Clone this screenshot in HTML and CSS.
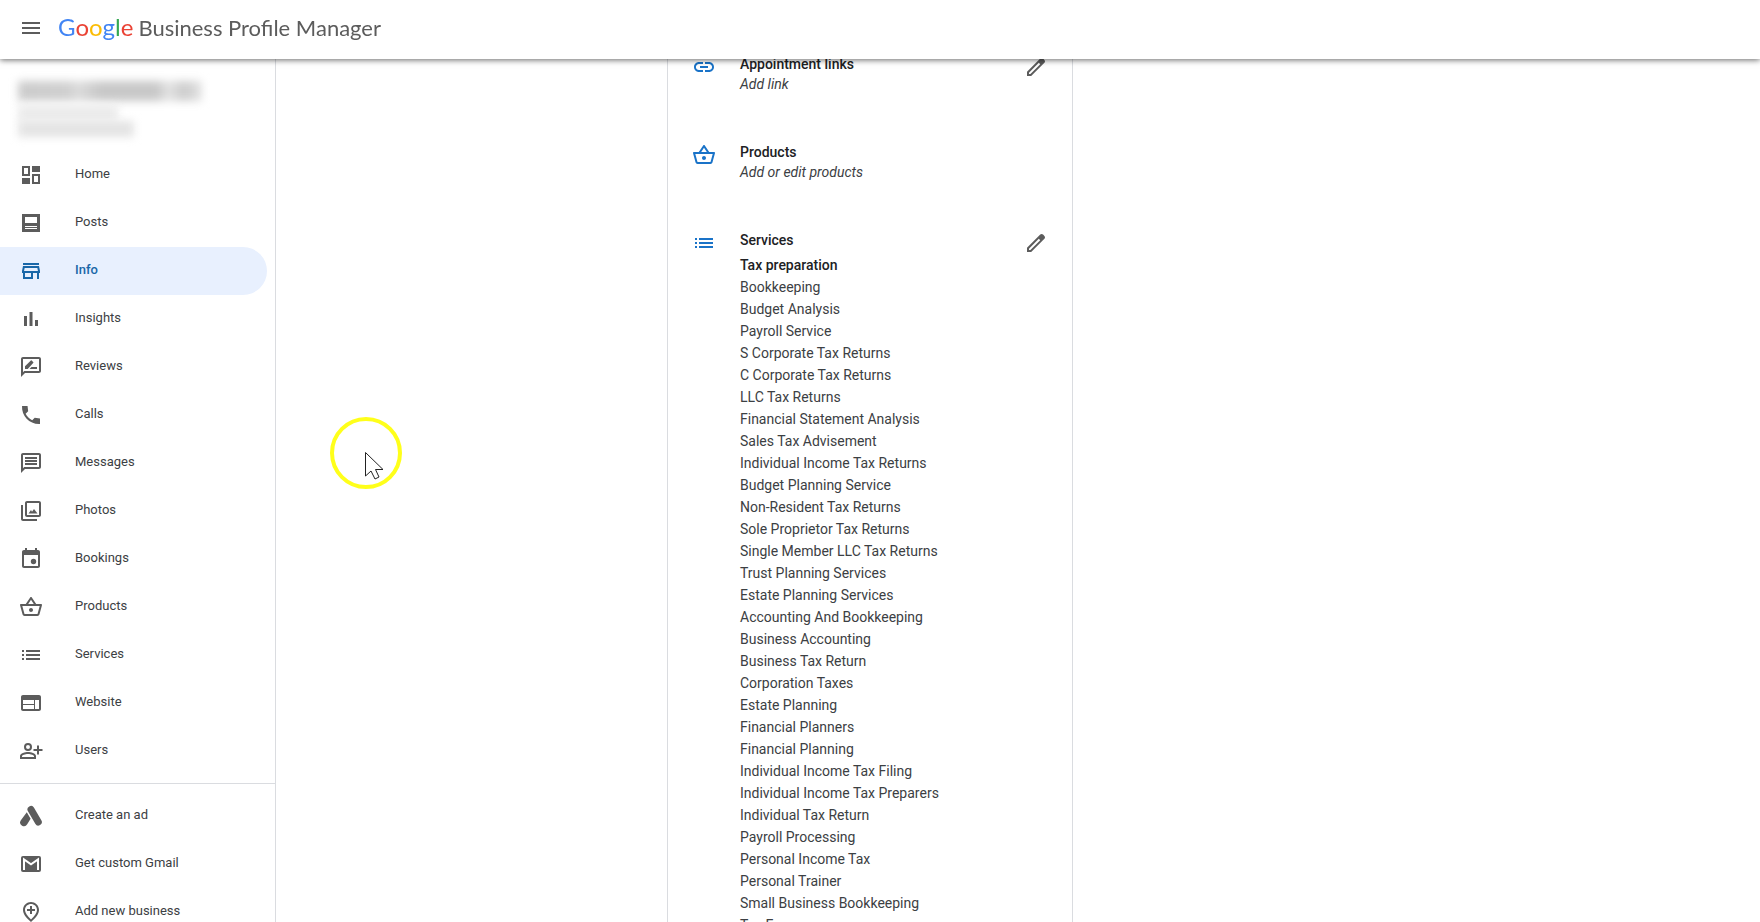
FILE: index.html
```
<!DOCTYPE html>
<html lang="en">
<head>
    <meta charset="UTF-8">
    <meta name="viewport" content="width=device-width, initial-scale=1.0">
    <title>Google Business Profile Manager</title>
    <link rel="stylesheet" href="styles.css">
</head>
<body>

<header class="header">
    <button class="icon-btn" aria-label="Main menu">
        <svg class="icon" viewBox="0 0 24 24"><path d="M3 18h18v-2H3v2zm0-5h18v-2H3v2zm0-7v2h18V6H3z"/></svg>
    </button>
    <a class="brand" href="#">
        <span class="logo"><span class="blue">G</span><span class="red">o</span><span class="yellow">o</span><span class="blue">g</span><span class="green">l</span><span class="red">e</span></span>
        <span class="product">Business Profile Manager</span>
    </a>
</header>

<div class="page">
    <nav class="sidebar">
        <div class="account" aria-hidden="true">
            <div class="account-name"></div>
            <div class="account-line"></div>
            <div class="account-line city"></div>
        </div>

        <a class="nav-item" href="#">
            <svg class="icon" viewBox="0 0 24 24"><path fill-rule="evenodd" d="M3 3h8v10H3zM5 5v6h4V5zM13 11h8v10h-8zM15 13v6h4v-6zM13 3h8v6h-8zM3 15h8v6H3z"/></svg>
            <span>Home</span>
        </a>
        <a class="nav-item" href="#">
            <svg class="icon" viewBox="0 0 24 24"><path fill-rule="evenodd" d="M3 3h18v18H3zM6 6v6h12V6zM6 15v1h12v-1zM6 17v1h12v-1z"/></svg>
            <span>Posts</span>
        </a>
        <a class="nav-item active" href="#">
            <svg class="icon" viewBox="0 0 24 24"><path d="M18.360 9l.6 3H5.040l.6-3h12.720M20 4H4v2h16V4zm0 3H4l-1 5v2h1v6h10v-6h4v6h2v-6h1v-2l-1-5zM6 18v-4h6v4H6z"/></svg>
            <span>Info</span>
        </a>
        <a class="nav-item" href="#">
            <svg class="icon" viewBox="0 0 24 24"><path d="M5 9h3v10H5zM10.500 5h3v14h-3zM16 13h3v6h-3z"/></svg>
            <span>Insights</span>
        </a>
        <a class="nav-item" href="#">
            <svg class="icon" viewBox="0 0 24 24"><path d="M20 2H4c-1.100 0-2 .9-2 2v18l4-4h14c1.100 0 2-.9 2-2V4c0-1.100-.9-2-2-2zm0 14H5.170L4 17.170V4h16v12zM10.500 14H18v-2h-5.500zM14.360 7.870c.2-.2.2-.51 0-.71l-1.770-1.770c-.2-.2-.51-.2-.71 0L6 11.260V14h2.740l5.620-6.130z"/></svg>
            <span>Reviews</span>
        </a>
        <a class="nav-item" href="#">
            <svg class="icon" viewBox="0 0 24 24"><path d="M21 15.460l-5.270-.61-2.520 2.520c-2.830-1.440-5.150-3.750-6.590-6.590l2.530-2.530L8.540 3H3.030C2.450 13.180 10.820 21.550 21 20.970v-5.510z"/></svg>
            <span>Calls</span>
        </a>
        <a class="nav-item" href="#">
            <svg class="icon" viewBox="0 0 24 24"><path d="M4 4h16v12H5.170L4 17.170V4m0-2c-1.100 0-1.990.9-1.990 2L2 22l4-4h14c1.100 0 2-.9 2-2V4c0-1.100-.9-2-2-2H4zm2 10h12v2H6v-2zm0-3h12v2H6V9zm0-3h12v2H6V6z"/></svg>
            <span>Messages</span>
        </a>
        <a class="nav-item" href="#">
            <svg class="icon" viewBox="0 0 24 24"><path d="M20 4v12H8V4h12m0-2H8c-1.100 0-2 .9-2 2v12c0 1.100.9 2 2 2h12c1.100 0 2-.9 2-2V4c0-1.100-.9-2-2-2zM12 11l-2.500 3.500h9L15 10l-2 2.700zM2 6v14c0 1.100.9 2 2 2h14v-2H4V6H2z"/></svg>
            <span>Photos</span>
        </a>
        <a class="nav-item" href="#">
            <svg class="icon" viewBox="0 0 24 24"><path fill-rule="evenodd" d="M19 3h-1V1h-2v2H8V1H6v2H5c-1.110 0-2 .9-2 2v14c0 1.100.89 2 2 2h14c1.100 0 2-.9 2-2V5c0-1.100-.9-2-2-2zm0 16H5V8h14v11z"/><circle cx="14.500" cy="14.500" r="2.700"/></svg>
            <span>Bookings</span>
        </a>
        <a class="nav-item" href="#">
            <svg class="icon" viewBox="0 0 24 24"><path d="M22 9h-4.790l-4.380-6.560c-.19-.28-.51-.42-.83-.42s-.64.14-.83.430L6.790 9H2c-.55 0-1 .45-1 1 0 .09.010.18.040.27l2.540 9.270c.23.84 1 1.460 1.920 1.460h13c.92 0 1.690-.62 1.930-1.460l2.540-9.270L23 10c0-.55-.45-1-1-1zM12 4.800L14.800 9H9.200L12 4.800zM18.500 19l-12.990.010L3.310 11H20.700l-2.200 8zM12 13c-1.100 0-2 .9-2 2s.9 2 2 2 2-.9 2-2-.9-2-2-2z"/></svg>
            <span>Products</span>
        </a>
        <a class="nav-item" href="#">
            <svg class="icon" viewBox="0 0 24 24"><path d="M3 13h2v-2H3v2zm0 4h2v-2H3v2zm0-8h2V7H3v2zm4 4h14v-2H7v2zm0 4h14v-2H7v2zM7 7v2h14V7H7z"/></svg>
            <span>Services</span>
        </a>
        <a class="nav-item" href="#">
            <svg class="icon" viewBox="0 0 24 24"><path d="M20 4H4c-1.100 0-1.990.9-1.990 2L2 18c0 1.100.9 2 2 2h16c1.100 0 2-.9 2-2V6c0-1.100-.9-2-2-2zm-5 14H4v-4h11v4zm0-5H4V9h11v4zm5 5h-4V9h4v9z"/></svg>
            <span>Website</span>
        </a>
        <a class="nav-item" href="#">
            <svg class="icon" viewBox="0 0 24 24"><path fill-rule="evenodd" d="M9 4a4 4 0 1 0 0 8 4 4 0 0 0 0-8zm0 2a2 2 0 1 1 0 4 2 2 0 0 1 0-4zM9 13c-2.670 0-8 1.340-8 4v3h16v-3c0-2.660-5.330-4-8-4zm6 5H3v-1c0-.64 3.130-2 6-2s6 1.370 6 2v1zM20 10V6.500h-2V10h-3.500v2H18v3.500h2V12h3.500v-2H20z"/></svg>
            <span>Users</span>
        </a>

        <hr class="divider">

        <a class="nav-item" href="#">
            <svg class="icon" viewBox="0 0 24 24"><path d="M12 5.500L19.300 18" fill="none" stroke="currentColor" stroke-width="7" stroke-linecap="round"/><path d="M7.800 8.200l3.800 6.600-3.400 5.500a3.600 3.600 0 0 1-6.500-3.800z"/></svg>
            <span>Create an ad</span>
        </a>
        <a class="nav-item" href="#">
            <svg class="icon" viewBox="0 0 24 24"><rect x="2" y="4" width="20" height="16" rx="2"/><path class="cutout" d="M5 18V7.500l7 4.800 7-4.800V18"/></svg>
            <span>Get custom Gmail</span>
        </a>
        <a class="nav-item" href="#">
            <svg class="icon" viewBox="0 0 24 24"><path fill-rule="evenodd" d="M12 2C8 2 4 5 4 10c0 3.500 2.700 7.500 8 12 5.300-4.500 8-8.500 8-12 0-5-4-8-8-8zm0 2c3 0 6 2.300 6 6.100 0 2.600-2 5.700-6 9.300-4-3.600-6-6.700-6-9.300C6 6.300 9 4 12 4zM11 6v3H8v2h3v3h2v-3h3V9h-3V6z"/></svg>
            <span>Add new business</span>
        </a>
    </nav>

    <main class="content">
        <div class="card">
            <section class="row">
                <svg class="icon" viewBox="0 0 24 24"><path d="M3.900 12c0-1.710 1.390-3.100 3.100-3.100h4V7H7c-2.760 0-5 2.240-5 5s2.240 5 5 5h4v-1.900H7c-1.710 0-3.100-1.390-3.100-3.100zM8 13h8v-2H8v2zm9-6h-4v1.900h4c1.710 0 3.100 1.390 3.100 3.100s-1.390 3.100-3.100 3.100h-4V17h4c2.760 0 5-2.240 5-5s-2.240-5-5-5z"/></svg>
                <div class="details">
                    <h2>Appointment links</h2>
                    <p class="hint">Add link</p>
                </div>
                <button class="icon-btn" aria-label="Edit appointment links">
                    <svg class="icon" viewBox="0 0 24 24"><path d="M20.410 4.940l-1.350-1.350c-.78-.78-2.050-.78-2.830 0L3 16.820V21h4.180L20.410 7.770c.79-.78.79-2.050 0-2.830zM6.410 19.060L5 19v-1.360l9.820-9.820 1.410 1.410-9.820 9.830z"/></svg>
                </button>
            </section>

            <section class="row">
                <svg class="icon" viewBox="0 0 24 24"><path d="M22 9h-4.790l-4.380-6.560c-.19-.28-.51-.42-.83-.42s-.64.14-.83.430L6.790 9H2c-.55 0-1 .45-1 1 0 .09.010.18.040.27l2.540 9.270c.23.84 1 1.460 1.920 1.460h13c.92 0 1.690-.62 1.930-1.460l2.540-9.270L23 10c0-.55-.45-1-1-1zM12 4.800L14.800 9H9.200L12 4.800zM18.500 19l-12.990.010L3.310 11H20.700l-2.200 8zM12 13c-1.100 0-2 .9-2 2s.9 2 2 2 2-.9 2-2-.9-2-2-2z"/></svg>
                <div class="details">
                    <h2>Products</h2>
                    <p class="hint">Add or edit products</p>
                </div>
            </section>

            <section class="row services">
                <svg class="icon" viewBox="0 0 24 24"><path d="M3 13h2v-2H3v2zm0 4h2v-2H3v2zm0-8h2V7H3v2zm4 4h14v-2H7v2zm0 4h14v-2H7v2zM7 7v2h14V7H7z"/></svg>
                <div class="details">
                    <h2>Services</h2>
                    <h3>Tax preparation</h3>
                    <ul>
                        <li>Bookkeeping</li>
                        <li>Budget Analysis</li>
                        <li>Payroll Service</li>
                        <li>S Corporate Tax Returns</li>
                        <li>C Corporate Tax Returns</li>
                        <li>LLC Tax Returns</li>
                        <li>Financial Statement Analysis</li>
                        <li>Sales Tax Advisement</li>
                        <li>Individual Income Tax Returns</li>
                        <li>Budget Planning Service</li>
                        <li>Non-Resident Tax Returns</li>
                        <li>Sole Proprietor Tax Returns</li>
                        <li>Single Member LLC Tax Returns</li>
                        <li>Trust Planning Services</li>
                        <li>Estate Planning Services</li>
                        <li>Accounting And Bookkeeping</li>
                        <li>Business Accounting</li>
                        <li>Business Tax Return</li>
                        <li>Corporation Taxes</li>
                        <li>Estate Planning</li>
                        <li>Financial Planners</li>
                        <li>Financial Planning</li>
                        <li>Individual Income Tax Filing</li>
                        <li>Individual Income Tax Preparers</li>
                        <li>Individual Tax Return</li>
                        <li>Payroll Processing</li>
                        <li>Personal Income Tax</li>
                        <li>Personal Trainer</li>
                        <li>Small Business Bookkeeping</li>
                        <li>Tax Essay</li>
                    </ul>
                </div>
                <button class="icon-btn" aria-label="Edit services">
                    <svg class="icon" viewBox="0 0 24 24"><path d="M20.410 4.940l-1.350-1.350c-.78-.78-2.050-.78-2.830 0L3 16.820V21h4.180L20.410 7.770c.79-.78.79-2.050 0-2.830zM6.410 19.060L5 19v-1.360l9.820-9.820 1.410 1.410-9.820 9.830z"/></svg>
                </button>
            </section>
        </div>
    </main>
</div>

<div class="pointer" aria-hidden="true">
    <svg viewBox="0 0 74 74">
        <circle cx="37" cy="37" r="34" fill="none" stroke="#ffff1a" stroke-width="4"/>
        <path d="M36.500 36.500v23.500l5.500-5 4 8 4-2-3.500-7.500h7.500z" fill="#fff" stroke="#222" stroke-width="1"/>
    </svg>
</div>

</body>
</html>
```
FILE: styles.css
```
* {
    box-sizing: border-box;
}
body {
    margin: 0;
    font-family: Roboto, sans-serif;
    font-size: 14px;
    color: #3c4043;
    background: #fff;
}
h2, h3, p, ul {
    margin: 0;
    padding: 0;
}
a {
    color: inherit;
    text-decoration: none;
}
.icon {
    display: block;
    flex: none;
    width: 24px;
    height: 24px;
    fill: currentColor;
}
.icon .cutout {
    fill: none;
    stroke: #fff;
    stroke-width: 2;
}
.icon-btn {
    flex: none;
    padding: 0;
    border: none;
    background: none;
    color: #5c5c5c;
    cursor: pointer;
}

/* top bar */
.header {
    position: fixed;
    top: 0;
    left: 0;
    right: 0;
    z-index: 2;
    display: flex;
    align-items: center;
    height: 59px;
    padding: 0 19px 4px;
    background: #fff;
    box-shadow: 0 1px 6px rgba(0, 0, 0, 0.6);
}
.brand {
    display: flex;
    align-items: baseline;
    gap: 5px;
    margin-left: 15px;
    padding-bottom: 2px;
    font-family: Lato, sans-serif;
    color: #5c5c5c;
}
.logo {
    font-size: 24px;
}
.product {
    font-size: 22px;
}
.blue {
    color: #4285f4;
}
.red {
    color: #ea4335;
}
.yellow {
    color: #fbbc05;
}
.green {
    color: #34a853;
}

.page {
    display: flex;
    height: 100vh;
    overflow: hidden;
}

/* left menu */
.sidebar {
    flex: none;
    width: 276px;
    padding-top: 59px;
    border-right: 1px solid #dadce0;
    overflow: hidden;
}
.account {
    height: 92px;
    padding: 22px 18px 0;
}
.account-name {
    width: 184px;
    height: 20px;
    background: linear-gradient(90deg, #ccc, #d0d0d0 28%, #ddd 32%, #c8c8c8 45%, #c8c8c8 75%, #e4e4e4 82%, #ccc 90%, #e4e4e4);
    filter: blur(4px);
}
.account-line {
    width: 100px;
    height: 16px;
    margin-top: 4px;
    background: #ebebeb;
    filter: blur(4px);
}
.account-line.city {
    width: 116px;
    margin-top: 0;
    background: #e4e4e4;
}
.nav-item {
    display: flex;
    align-items: center;
    gap: 32px;
    height: 48px;
    margin-right: 8px;
    padding-left: 19px;
    border-radius: 0 24px 24px 0;
    font-size: 13px;
    color: #5c5c5c;
}
.nav-item span {
    padding-bottom: 4px;
    color: #3c4043;
}
.nav-item.active, .nav-item.active span {
    color: #1967a8;
}
.nav-item.active {
    background: #e8f0fe;
    font-weight: 500;
}
.divider {
    margin: 8px 0;
    border: none;
    border-top: 1px solid #dadce0;
}

/* business info */
.content {
    flex: 1;
    display: flex;
    justify-content: center;
    align-items: flex-start;
    padding-right: 296px;
}
.card {
    width: 406px;
    padding: 54px 24px 24px;
    border: 1px solid #dadce0;
    border-top: none;
}
.row {
    display: flex;
    align-items: flex-start;
    gap: 24px;
    margin-bottom: 48px;
}
.row .icon {
    margin-top: 1px;
}
.row > .icon {
    color: #1a73c8;
}
.details {
    flex: 1;
}
.details h2 {
    font-size: 14px;
    line-height: 20px;
    font-weight: 500;
    color: #202124;
}
.details h3 {
    margin-top: 4px;
    font-size: 14px;
    line-height: 22px;
    font-weight: 500;
    color: #202124;
}
.hint {
    line-height: 20px;
    font-style: italic;
}
.details ul {
    list-style: none;
    line-height: 22px;
}

/* mouse highlight */
.pointer {
    position: absolute;
    left: 329px;
    top: 416px;
    z-index: 3;
    width: 74px;
    height: 74px;
    pointer-events: none;
}
```
